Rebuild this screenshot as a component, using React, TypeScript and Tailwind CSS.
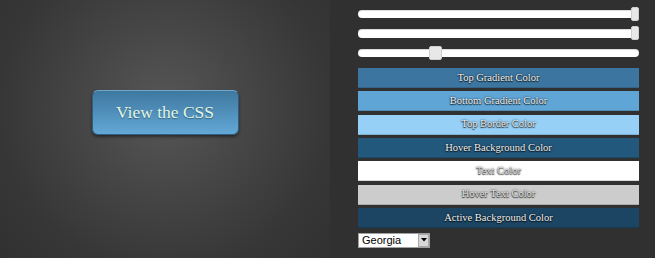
import React from "react";

const bars: { label: string; bg: string; color: string }[] = [
  { label: "Top Gradient Color", bg: "bg-[#3c76a0]", color: "text-[#f2f2f2]" },
  { label: "Bottom Gradient Color", bg: "bg-[#5fa5d5]", color: "text-[#eeeeee]" },
  { label: "Top Border Color", bg: "bg-[#96d0f6]", color: "text-[#e8e8e8]" },
  { label: "Hover Background Color", bg: "bg-[#22587c]", color: "text-[#f2f2f2]" },
  { label: "Text Color", bg: "bg-[#ffffff]", color: "text-[#dcdcdc]" },
  { label: "Hover Text Color", bg: "bg-[#cccccc]", color: "text-[#e4e4e4]" },
  { label: "Active Background Color", bg: "bg-[#1b4563]", color: "text-[#f2f2f2]" },
];

function Slider({ pos, wide }: { pos: number; wide?: boolean }) {
  return (
    <div className="h-[19.5px] flex items-center">
      <div className="relative w-[281px] h-[8.5px] rounded-[4px] bg-white shadow-[inset_0_1px_1px_rgba(0,0,0,0.15)]">
        <div
          className={`absolute top-1/2 -translate-y-1/2 ${wide ? "w-[13px]" : "w-[8px]"} h-[14px] rounded-[2px] bg-[#e8e8e8] border border-[#cfcfcf]`}
          style={{ left: `${pos}px` }}
        />
      </div>
    </div>
  );
}

export default function App() {
  return (
    <div className="flex w-[655px] h-[258px] overflow-hidden" style={{ fontFamily: "'Liberation Serif', 'DejaVu Serif', serif" }}>
      <div className="w-[330px] h-[258px] flex justify-center pt-[90px] bg-[radial-gradient(circle_at_50%_42%,#575757_0%,#474747_35%,#363636_75%,#313131_100%)]">
        <div className="w-[147px] h-[45px] rounded-[6px] border border-[#2f5f80] border-t-[#6fa9cf] bg-gradient-to-b from-[#3e789f] to-[#63a8d7] shadow-[0_2px_3px_rgba(0,0,0,0.45)] flex items-center justify-center">
          <span className="text-[17.5px] text-[#e2f5e4] [text-shadow:0_1px_1px_rgba(0,0,0,0.35)]">View the CSS</span>
        </div>
      </div>
      <div className="flex-1 h-[258px] bg-[#303030] pl-[28px] pt-[4px] flex flex-col">
        <Slider pos={273} />
        <Slider pos={273} />
        <Slider pos={71} wide />
        <div className="mt-[5.5px] flex flex-col gap-[3.33px]">
          {bars.map((b) => (
            <div
              key={b.label}
              className={`w-[281px] h-[20px] ${b.bg} border-b border-[rgba(0,0,0,0.15)] flex items-center justify-center text-[10.5px] ${b.color} [text-shadow:0_0_2px_rgba(0,0,0,0.9),0_1px_1px_rgba(0,0,0,0.8)]`}
            >
              {b.label}
            </div>
          ))}
        </div>
        <div className="mt-[5px] w-[72px] h-[15px] bg-white border border-[#a0a0a0] flex items-center">
          <span className="flex-1 pl-[3px] text-[11px] leading-none text-black" style={{ fontFamily: "'Liberation Sans', Arial, sans-serif" }}>
            Georgia
          </span>
          <div className="w-[11px] h-[13px] bg-[#d8d8d8] border border-[#a8a8a8] flex items-center justify-center">
            <svg width="6" height="4" viewBox="0 0 6 4">
              <path d="M0 0 H6 L3 3.5 Z" fill="#000" />
            </svg>
          </div>
        </div>
      </div>
    </div>
  );
}
